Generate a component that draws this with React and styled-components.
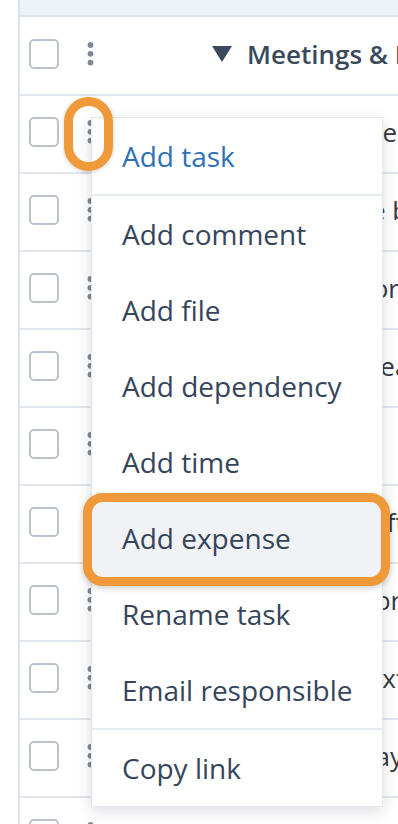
import React from "react";
import styled, { createGlobalStyle } from "styled-components";

const Global = createGlobalStyle`
  html, body { margin: 0; padding: 0; background: #fff; }
  body { font-family: "Open Sans", "Noto Sans", sans-serif; }
`;

const Page = styled.div`
  position: relative;
  width: 398px;
  height: 824px;
  overflow: hidden;
  background: #fff;
`;

const Table = styled.div`
  margin-left: 18px;
  border-left: 2px solid #dde3ea;
  min-height: 824px;
`;

const Band = styled.div`
  height: 15px;
  background: #eef3f8;
  border-bottom: 2px solid #dfe5ec;
`;

const Row = styled.div`
  position: relative;
  display: flex;
  align-items: center;
  height: ${(p) => (p.$header ? 79 : 78)}px;
  padding: 0 0 4px 9px;
  box-sizing: border-box;
  border-bottom: 2px solid #e3e7ed;
  white-space: nowrap;
`;

const Check = styled.span`
  flex: none;
  width: 30px;
  height: 30px;
  box-sizing: border-box;
  border: 2px solid #bcc2cb;
  border-radius: 5px;
  background: #fff;
`;

const KebabCell = styled.span`
  flex: none;
  width: 62px;
  display: flex;
  justify-content: center;
`;

const Title = styled.span`
  display: flex;
  align-items: center;
  gap: 15px;
  padding-left: 91px;
  font-size: 26px;
  font-weight: 600;
  color: #3a4a5c;
`;

const Name = styled.span`
  padding-left: 133px;
  font-size: 26px;
  color: #343a42;
`;

const Pill = styled.span`
  position: absolute;
  left: 44px;
  top: 1px;
  width: 49px;
  height: 74px;
  box-sizing: border-box;
  border: 9px solid #f0993b;
  border-radius: 26px;
  box-shadow: 0 1px 4px rgba(0, 0, 0, 0.18);
  z-index: 5;
`;

const Menu = styled.div`
  position: absolute;
  top: 117px;
  left: 91px;
  width: 292px;
  box-sizing: border-box;
  background: #fff;
  border: 1px solid #e4e7eb;
  box-shadow: 0 4px 14px rgba(30, 40, 55, 0.16);
  z-index: 4;
`;

const Item = styled.div`
  position: relative;
  height: 76px;
  display: flex;
  align-items: center;
  padding-left: 30px;
  font-size: 28px;
  color: ${(p) => (p.$link ? "#2f70b6" : "#36455a")};
  ${(p) =>
    p.$highlight &&
    `
    &::before {
      content: "";
      position: absolute;
      top: -7px;
      bottom: -10px;
      left: -9px;
      right: -8px;
      box-sizing: border-box;
      border: 9px solid #f0993b;
      border-radius: 20px;
      background: #f1f2f5;
      box-shadow: 0 2px 6px rgba(0, 0, 0, 0.2);
    }
  `}
`;

const Label = styled.span`
  position: relative;
`;

const Divider = styled.div`
  height: 2px;
  background: #e6e9ed;
`;

const Kebab = () => (
  <svg width="7" height="24" viewBox="0 0 7 24">
    <circle cx="3.5" cy="3" r="2.9" fill="#7d8797" />
    <circle cx="3.5" cy="11.8" r="2.9" fill="#7d8797" />
    <circle cx="3.5" cy="20.6" r="2.9" fill="#7d8797" />
  </svg>
);

const Caret = () => (
  <svg width="20" height="16" viewBox="0 0 20 16">
    <path d="M0 0 H20 L10 16 Z" fill="#3a4a5c" />
  </svg>
);

const tasks = [
  "Prepare the agenda",
  "Review the budget",
  "Finish report",
  "Schedule team sync",
  "Call client",
  "Review draft",
  "Check report",
  "Discuss next steps",
  "Call Monday",
  "Send minutes",
];

export default function App() {
  return (
    <Page>
      <Global />
      <Table>
        <Band />
        <Row $header>
          <Check />
          <KebabCell>
            <Kebab />
          </KebabCell>
          <Title>
            <Caret />
            Meetings &amp; Events
          </Title>
        </Row>
        {tasks.map((t, i) => (
          <Row key={t}>
            {i === 0 && <Pill />}
            <Check />
            <KebabCell>
              <Kebab />
            </KebabCell>
            <Name>{t}</Name>
          </Row>
        ))}
      </Table>
      <Menu>
        <Item $link>
          <Label>Add task</Label>
        </Item>
        <Divider />
        <Item><Label>Add comment</Label></Item>
        <Item><Label>Add file</Label></Item>
        <Item><Label>Add dependency</Label></Item>
        <Item><Label>Add time</Label></Item>
        <Item $highlight><Label>Add expense</Label></Item>
        <Item><Label>Rename task</Label></Item>
        <Item><Label>Email responsible</Label></Item>
        <Divider />
        <Item><Label>Copy link</Label></Item>
      </Menu>
    </Page>
  );
}
